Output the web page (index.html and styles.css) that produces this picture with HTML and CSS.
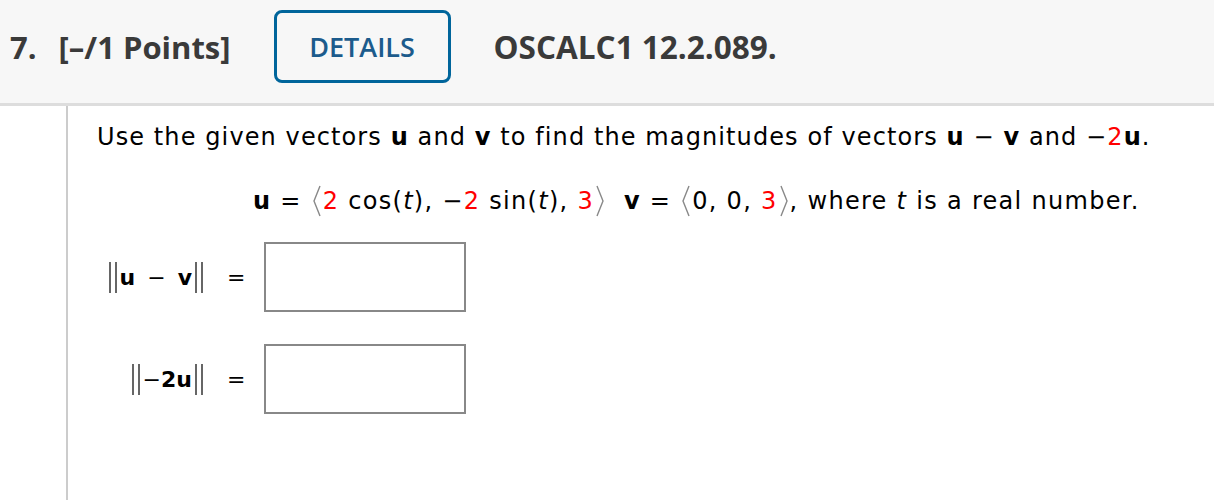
FILE: index.html
```html
<!DOCTYPE html>
<html>
<head>
<meta charset="utf-8">
<link rel="stylesheet" href="styles.css">
</head>
<body>
<div class="header">
  <span class="qnum">7.</span>
  <span class="points">[–/1 Points]</span>
  <button class="details">DETAILS</button>
  <span class="code">OSCALC1 12.2.089.</span>
</div>
<div class="content">
  <div class="gutter"></div>
  <div class="main">
    <p class="prompt">Use the given vectors <b>u</b> and <b>v</b> to find the magnitudes of vectors <b>u</b> − <b>v</b> and −<span class="red">2</span><b>u</b>.</p>
    <p class="given"><b>u</b> = <svg class="ang" viewBox="0 0 10 32"><polyline points="8,1 2,16 8,31"/></svg><span class="red">2</span> cos(<i>t</i>), −<span class="red">2</span> sin(<i>t</i>), <span class="red">3</span><svg class="ang" viewBox="0 0 10 32"><polyline points="2,1 8,16 2,31"/></svg>&nbsp; <b>v</b> = <svg class="ang" viewBox="0 0 10 32"><polyline points="8,1 2,16 8,31"/></svg>0, 0, <span class="red">3</span><svg class="ang" viewBox="0 0 10 32"><polyline points="2,1 8,16 2,31"/></svg>, where <i>t</i> is a real number.</p>
    <div class="answers">
      <div class="row">
        <span class="label"><span class="norm"></span><b>u</b><span class="minus">−</span><b>v</b><span class="norm"></span></span>
        <span class="eq">=</span>
        <input class="box" type="text">
      </div>
      <div class="row">
        <span class="label"><span class="norm"></span>−<b>2u</b><span class="norm"></span></span>
        <span class="eq">=</span>
        <input class="box" type="text">
      </div>
    </div>
  </div>
</div>
</body>
</html>
```
FILE: styles.css
```css
html, body {
  margin: 0;
  padding: 0;
  background: #ffffff;
}
.header {
  height: 106px;
  box-sizing: border-box;
  background: #f7f7f7;
  border-bottom: 3px solid #dddddd;
  padding: 10px 0 20px 10px;
  display: flex;
  align-items: center;
  font-family: "Open Sans", "DejaVu Sans", sans-serif;
  font-weight: 700;
  font-size: 31px;
  color: #3a3a3a;
}
.qnum {
  margin-right: 22px;
}
.points {
  margin-right: 43px;
}
.details {
  width: 177px;
  height: 73px;
  box-sizing: border-box;
  border: 3px solid #00659b;
  border-radius: 8px;
  background: #f7f7f7;
  color: #1c5b8c;
  font-family: "Open Sans", sans-serif;
  font-weight: 600;
  font-size: 27px;
  padding: 0;
  margin-right: 43px;
}
.code {
  font-size: 31.5px;
}
.content {
  display: flex;
  height: 394px;
}
.gutter {
  width: 66px;
}
.main {
  flex: 1;
  border-left: 2px solid #cccccc;
  padding-left: 29px;
  font-family: "DejaVu Sans", Verdana, sans-serif;
  font-size: 24px;
  letter-spacing: 1.1px;
  color: #000;
}
.prompt {
  margin: 15px 0 0 0;
  line-height: 32px;
}
.given {
  margin: 32px 0 0 156px;
  line-height: 32px;
  letter-spacing: 1.3px;
}
.red {
  color: #ff0000;
}
.ang {
  width: 10px;
  height: 32px;
  vertical-align: -8px;
  margin: 0 1px;
}
.ang polyline {
  fill: none;
  stroke: #888888;
  stroke-width: 1.4;
}
.answers {
  margin-top: 25px;
  display: flex;
  flex-direction: column;
  gap: 32px;
}
.row {
  display: flex;
  align-items: center;
}
.label {
  width: 109px;
  display: inline-flex;
  justify-content: flex-end;
  align-items: center;
  font-size: 22px;
  letter-spacing: 0;
}
.minus {
  margin: 0 12px;
}
.norm {
  display: inline-block;
  width: 4px;
  height: 31px;
  border-left: 2px solid #666;
  border-right: 2px solid #666;
  margin: 0 3px;
}
.eq {
  margin-left: 21px;
  margin-right: 19px;
  font-size: 22px;
  letter-spacing: 0;
}
.box {
  width: 202px;
  height: 70px;
  box-sizing: border-box;
  border: 2px solid #888888;
  margin: 0;
  padding: 0;
  background: #fff;
}
```
